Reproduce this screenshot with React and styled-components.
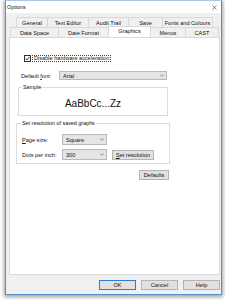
import React from 'react';
import styled, { createGlobalStyle, css } from 'styled-components';

// Windows-style "Options" dialog, Graphics tab selected
const GlobalStyle = createGlobalStyle`
  html, body {
    margin: 0;
    padding: 0;
    background: #ffffff;
  }
  body {
    font-family: "Liberation Sans", Arial, sans-serif;
  }
`;

const Stage = styled.div`
  width: 225px;
  height: 300px;
  padding-left: 5px;
  box-sizing: border-box;
  overflow: hidden;
`;

const Window = styled.div`
  width: 217px;
  height: 295px;
  box-sizing: border-box;
  border: 1px solid #4f8fd0;
  border-top-color: #a9c6e6;
  background: #f0f0f0;
  box-shadow: 0 1px 4px 1px rgba(0, 0, 0, 0.38);
  display: flex;
  flex-direction: column;
  font-size: 5.6px;
  color: #111111;
`;

const TitleBar = styled.div`
  height: 12px;
  background: #ffffff;
  display: flex;
  align-items: center;
  justify-content: space-between;
  padding: 0 4px 0 1px;
  font-size: 5.4px;
`;

const Body = styled.div`
  flex: 1;
  display: flex;
  flex-direction: column;
  padding: 4px 1px 4px 3px;
  min-height: 0;
`;

const TabRow = styled.div`
  display: flex;
  height: 10px;
  padding-left: ${({ $indent }) => $indent}px;
`;

const Tab = styled.div`
  width: ${({ $w }) => $w}px;
  box-sizing: border-box;
  height: 10px;
  border: 1px solid #d9d9d9;
  border-bottom: none;
  margin-right: -1px;
  background: #f0f0f0;
  display: flex;
  align-items: center;
  justify-content: center;
  white-space: nowrap;
  position: relative;
  ${({ $active }) =>
    $active &&
    css`
      background: #ffffff;
      height: 11px;
      margin-bottom: -1px;
      margin-top: -1px;
      z-index: 1;
      align-items: flex-start;
      padding-top: 1px;
    `}
`;

const Panel = styled.div`
  flex: 1;
  background: #ffffff;
  border: 1px solid #d9d9d9;
  padding: 17px 49px 0 6px;
  display: flex;
  flex-direction: column;
`;

const CheckRow = styled.div`
  display: flex;
  align-items: center;
  height: 7px;
  margin-left: 8px;
`;

const CheckBox = styled.span`
  width: 7px;
  height: 7px;
  box-sizing: border-box;
  border: 1px solid #333333;
  background: #ffffff;
  display: flex;
  align-items: center;
  justify-content: center;
`;

const FocusLabel = styled.span`
  margin-left: 1px;
  border: 1px dotted #444444;
  padding: 0 1px;
  line-height: 5px;
  white-space: nowrap;
`;

const FieldRow = styled.div`
  display: flex;
  align-items: center;
  margin-top: ${({ $top }) => $top || 0}px;
  margin-left: ${({ $left }) => $left || 0}px;
`;

const FieldLabel = styled.span`
  width: ${({ $w }) => $w}px;
  white-space: nowrap;
`;

const Select = styled.div`
  width: ${({ $w }) => $w}px;
  height: ${({ $h }) => $h}px;
  box-sizing: border-box;
  border: 1px solid #b9b9b9;
  background: #e5e5e5;
  display: flex;
  align-items: center;
  justify-content: space-between;
  padding: 0 2px 0 3px;
`;

const Group = styled.fieldset`
  margin: ${({ $margin }) => $margin};
  padding: ${({ $padding }) => $padding};
  border: 1px solid #dcdcdc;
  min-width: 0;
`;

const Legend = styled.legend`
  padding: 0 1px;
  line-height: 6px;
  font-size: 5.4px;
`;

const SampleText = styled.div`
  height: 23px;
  display: flex;
  align-items: center;
  justify-content: center;
  font-size: 10px;
  color: #111111;
  padding-top: 2px;
`;

const Button = styled.div`
  width: ${({ $w }) => $w}px;
  height: 10px;
  box-sizing: border-box;
  border: 1px solid ${({ $focus }) => ($focus ? '#2a7fd4' : '#b4b4b4')};
  background: #e1e1e1;
  display: flex;
  align-items: center;
  justify-content: center;
  white-space: nowrap;
  margin-left: ${({ $left }) => $left || 0}px;
`;

const DefaultsButton = styled(Button)`
  align-self: flex-end;
  margin-top: 6px;
  margin-right: 1px;
`;

const Footer = styled.div`
  display: flex;
  justify-content: flex-end;
  gap: 5px;
  margin-top: 5px;
`;

const Chevron = () => (
  <svg width="4" height="3" viewBox="0 0 4 3">
    <polyline points="0.3,0.5 2,2.3 3.7,0.5" fill="none" stroke="#555" strokeWidth="0.6" />
  </svg>
);

const CloseIcon = () => (
  <svg width="5" height="5" viewBox="0 0 5 5">
    <path d="M0.5 0.5 L4.5 4.5 M4.5 0.5 L0.5 4.5" stroke="#333" strokeWidth="0.6" />
  </svg>
);

const CheckMark = () => (
  <svg width="5" height="5" viewBox="0 0 5 5">
    <polyline points="0.5,2.6 1.9,4 4.5,0.8" fill="none" stroke="#222" strokeWidth="0.9" />
  </svg>
);

const topTabs = [
  { label: 'General', w: 32 },
  { label: 'Text Editor', w: 42 },
  { label: 'Audit Trail', w: 41 },
  { label: 'Save', w: 35 },
  { label: 'Fonts and Colours', w: 51 },
];

const bottomTabs = [
  { label: 'Data Space', w: 49 },
  { label: 'Date Format', w: 51 },
  { label: 'Graphics', w: 43, active: true },
  { label: 'Menus', w: 36 },
  { label: 'CAST', w: 34 },
];

export default function App() {
  return (
    <>
      <GlobalStyle />
      <Stage>
        <Window>
          <TitleBar>
            <span>Options</span>
            <CloseIcon />
          </TitleBar>
          <Body>
            <TabRow $indent={7}>
              {topTabs.map((t) => (
                <Tab key={t.label} $w={t.w}>{t.label}</Tab>
              ))}
            </TabRow>
            <TabRow $indent={1}>
              {bottomTabs.map((t) => (
                <Tab key={t.label} $w={t.w} $active={t.active}>{t.label}</Tab>
              ))}
            </TabRow>
            <Panel>
              <CheckRow>
                <CheckBox>
                  <CheckMark />
                </CheckBox>
                <FocusLabel>Disable hardware acceleration</FocusLabel>
              </CheckRow>

              <FieldRow $top={9} $left={5}>
                <FieldLabel $w={38}>Default <u>f</u>ont:</FieldLabel>
                <Select $w={108} $h={9}>
                  <span>Arial</span>
                  <Chevron />
                </Select>
              </FieldRow>

              <Group $margin="4px 2px 0 2px" $padding="0 3px 0 3px">
                <Legend>Sample</Legend>
                <SampleText>AaBbCc...Zz</SampleText>
              </Group>

              <Group $margin="4px 0 0 0" $padding="0 3px 3px 4px">
                <Legend>Set resolution of saved graphs</Legend>
                <FieldRow $top={8} $left={1}>
                  <FieldLabel $w={40}><u>P</u>age size:</FieldLabel>
                  <Select $w={45} $h={11}>
                    <span>Square</span>
                    <Chevron />
                  </Select>
                </FieldRow>
                <FieldRow $top={4} $left={1}>
                  <FieldLabel $w={40}>Dots per inch:</FieldLabel>
                  <Select $w={45} $h={11}>
                    <span>300</span>
                    <Chevron />
                  </Select>
                  <Button $w={42} $left={5}><u>S</u>et resolution</Button>
                </FieldRow>
              </Group>

              <DefaultsButton $w={30}>Defaults</DefaultsButton>
            </Panel>
            <Footer>
              <Button $w={37} $focus>OK</Button>
              <Button $w={37}>Cancel</Button>
              <Button $w={37}>Help</Button>
            </Footer>
          </Body>
        </Window>
      </Stage>
    </>
  );
}
